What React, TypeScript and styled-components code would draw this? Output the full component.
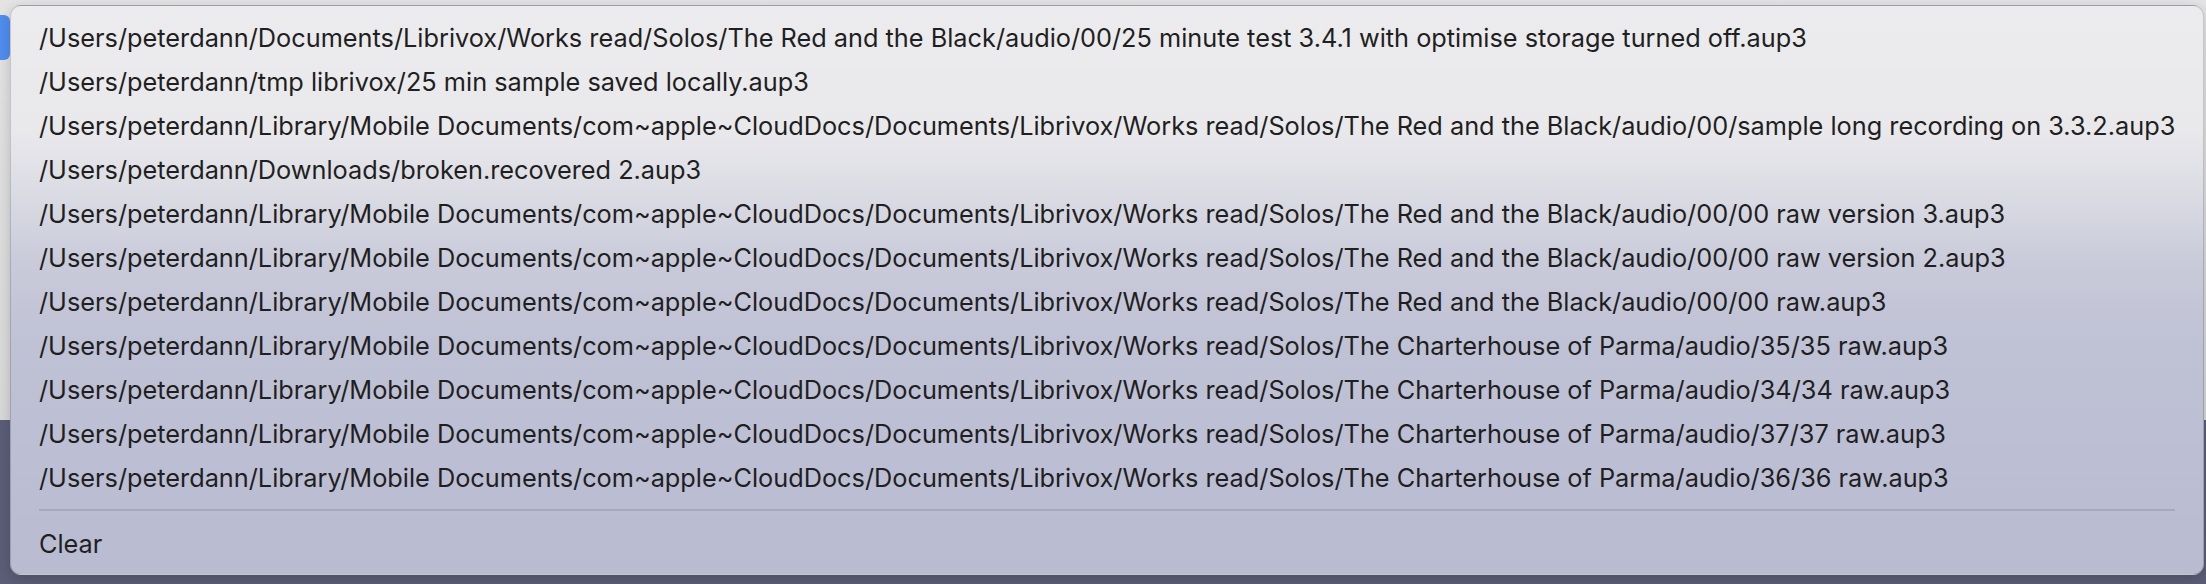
import * as React from 'react';
import styled, { createGlobalStyle } from 'styled-components';

const GlobalStyle = createGlobalStyle`
  html, body {
    margin: 0;
    padding: 0;
    width: 2206px;
    height: 584px;
    overflow: hidden;
    background: #5c5e78;
  }
`;

const recentFiles = [
  '/Users/peterdann/Documents/Librivox/Works read/Solos/The Red and the Black/audio/00/25 minute test 3.4.1 with optimise storage turned off.aup3',
  '/Users/peterdann/tmp librivox/25 min sample saved locally.aup3',
  '/Users/peterdann/Library/Mobile Documents/com~apple~CloudDocs/Documents/Librivox/Works read/Solos/The Red and the Black/audio/00/sample long recording on 3.3.2.aup3',
  '/Users/peterdann/Downloads/broken.recovered 2.aup3',
  '/Users/peterdann/Library/Mobile Documents/com~apple~CloudDocs/Documents/Librivox/Works read/Solos/The Red and the Black/audio/00/00 raw version 3.aup3',
  '/Users/peterdann/Library/Mobile Documents/com~apple~CloudDocs/Documents/Librivox/Works read/Solos/The Red and the Black/audio/00/00 raw version 2.aup3',
  '/Users/peterdann/Library/Mobile Documents/com~apple~CloudDocs/Documents/Librivox/Works read/Solos/The Red and the Black/audio/00/00 raw.aup3',
  '/Users/peterdann/Library/Mobile Documents/com~apple~CloudDocs/Documents/Librivox/Works read/Solos/The Charterhouse of Parma/audio/35/35 raw.aup3',
  '/Users/peterdann/Library/Mobile Documents/com~apple~CloudDocs/Documents/Librivox/Works read/Solos/The Charterhouse of Parma/audio/34/34 raw.aup3',
  '/Users/peterdann/Library/Mobile Documents/com~apple~CloudDocs/Documents/Librivox/Works read/Solos/The Charterhouse of Parma/audio/37/37 raw.aup3',
  '/Users/peterdann/Library/Mobile Documents/com~apple~CloudDocs/Documents/Librivox/Works read/Solos/The Charterhouse of Parma/audio/36/36 raw.aup3'
];

// backdrop: app window (light) over the desktop (dark)
const Screen = styled.div`
  position: relative;
  width: 2206px;
  height: 584px;
  display: flex;
  flex-direction: column;
`;

const AppWindow = styled.div`
  height: 420px;
  background: linear-gradient(180deg, #e4e4e4 0%, #d9d9d9 100%);
  padding-top: 15px;
  box-sizing: border-box;
`;

const SelectedTab = styled.div`
  width: 10px;
  height: 45px;
  background: #4f8ef0;
  border-radius: 0 6px 6px 0;
`;

const Desktop = styled.div`
  flex: 1;
  background: #5c5e78;
`;

// the popup menu lies over the window
const Menu = styled.div`
  position: absolute;
  top: 5px;
  left: 10px;
  width: 2194px;
  height: 570px;
  box-sizing: border-box;
  padding: 10px 0 9px;
  border-radius: 11px;
  border: 1px solid rgba(0, 0, 0, 0.16);
  background: linear-gradient(
    180deg,
    #ececee 0%,
    #e9e9ec 22%,
    #dcdde4 32%,
    #c9cbda 45%,
    #bfc1d5 60%,
    #b9bbd1 100%
  );
  box-shadow: 0 4px 14px rgba(0, 0, 0, 0.18);
  display: flex;
  flex-direction: column;
`;

const Item = styled.div`
  height: 44px;
  display: flex;
  align-items: center;
  padding: 0 28px;
  font-family: Inter, 'Liberation Sans', sans-serif;
  font-size: 25.3px;
  color: #1f1f22;
  white-space: nowrap;
`;

const Separator = styled.div`
  height: 22px;
  display: flex;
  align-items: center;
  padding: 0 28px;

  &::after {
    content: '';
    flex: 1;
    height: 2px;
    background: #a7a9bc;
  }
`;

const App = () => {
  return (
    <React.Fragment>
      <GlobalStyle />
      <Screen>
        <AppWindow>
          <SelectedTab />
        </AppWindow>
        <Desktop />
        <Menu>
          {recentFiles.map((path) => (
            <Item key={path}>{path}</Item>
          ))}
          <Separator />
          <Item>Clear</Item>
        </Menu>
      </Screen>
    </React.Fragment>
  );
};

export default App;
